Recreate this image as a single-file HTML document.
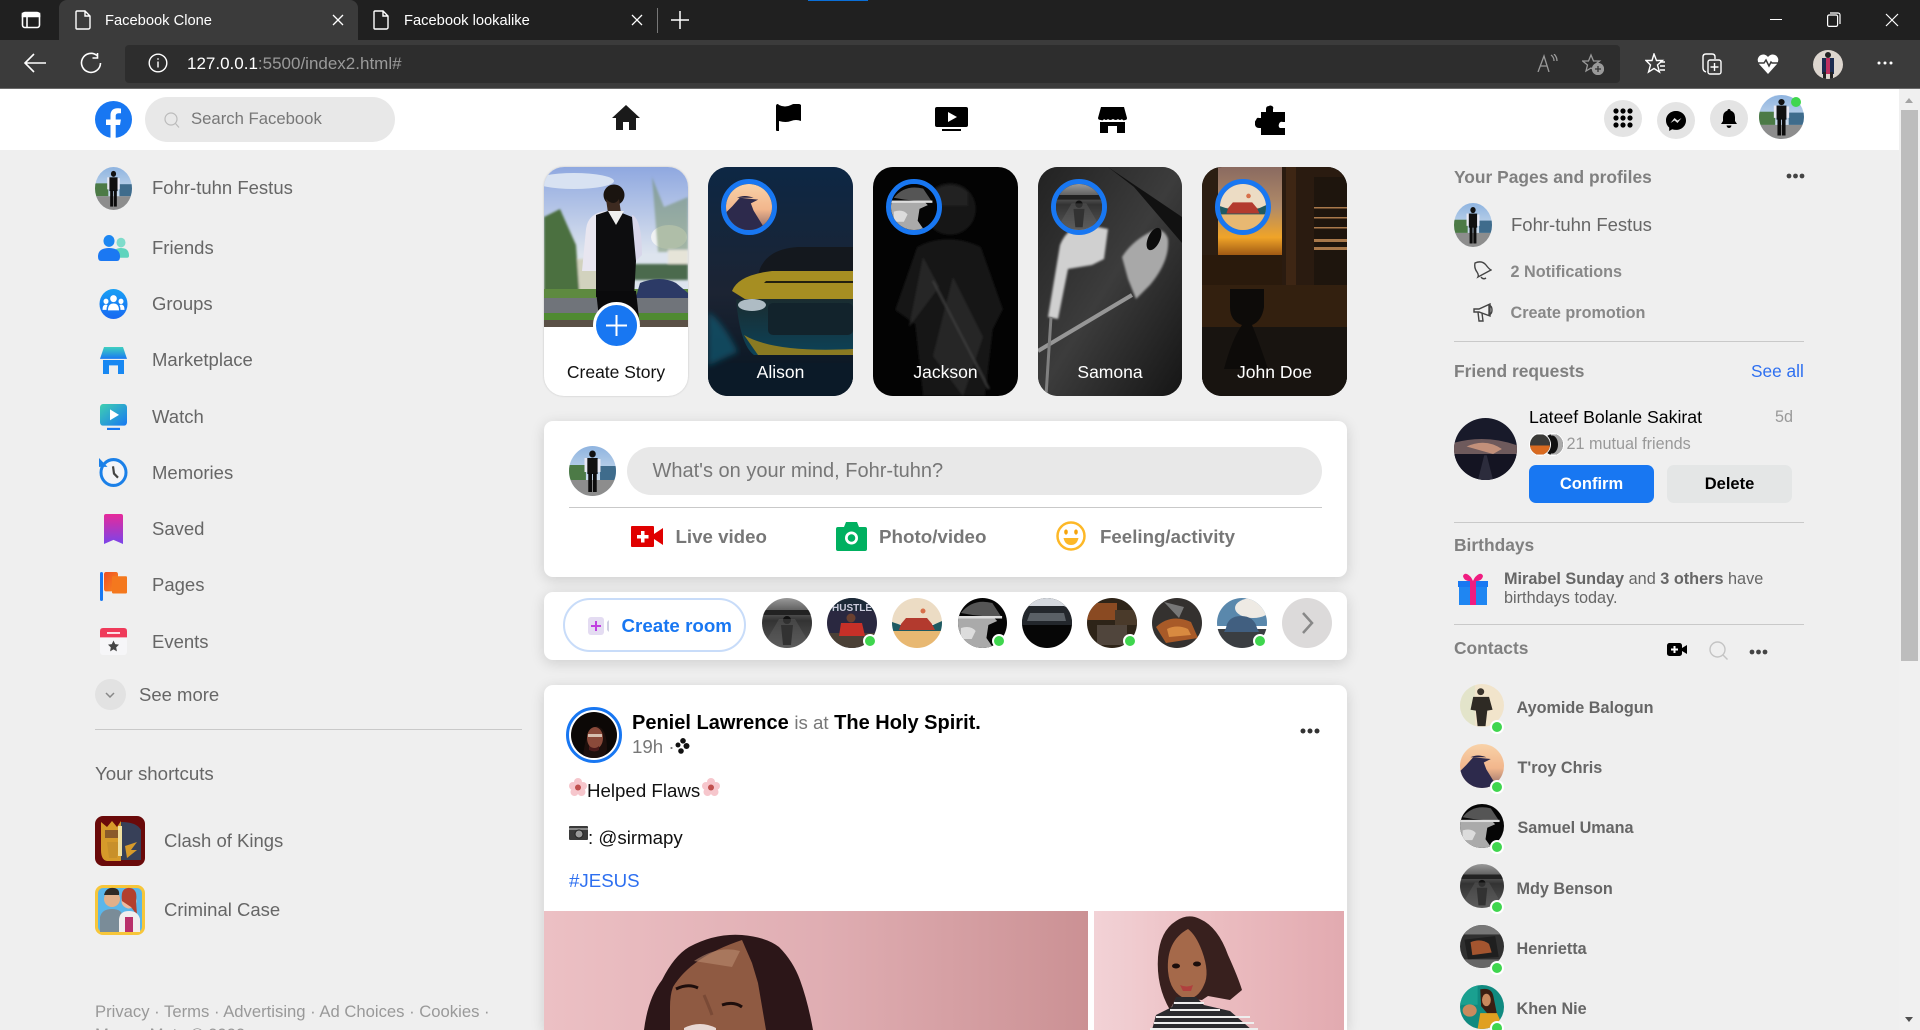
<!DOCTYPE html>
<html lang="en"><head><meta charset="utf-8"><title>Facebook Clone</title>
<style>
html,body{margin:0;padding:0;width:1920px;height:1030px;overflow:hidden;background:#efefef;font-family:"Liberation Sans",Arial,sans-serif}
#w{position:relative;width:1920px;height:1030px;overflow:hidden;background:#efefef}
.a{position:absolute;display:block}
.t{position:absolute;white-space:nowrap;line-height:24px;margin:0}
.r{border-radius:50%}
.b{font-weight:700}
.side{font-size:18.5px;color:#666}
.ct{font-size:16.2px;font-weight:700;color:#666}
.hd{font-size:17.4px;font-weight:700;color:#808080}
.st{position:absolute;top:167px;width:145px;height:229px;border-radius:20px;overflow:hidden}
.sl{position:absolute;left:0;right:0;top:193px;text-align:center;font-size:17.5px;line-height:24px;color:#fff}
.ring{position:absolute;left:13px;top:12px;width:56px;height:56px;box-sizing:border-box;border:5px solid #1877f2;border-radius:50%;overflow:hidden}
.ring svg{width:100%;height:100%;display:block}
.g{position:absolute;width:11px;height:11px;border-radius:50%;background:#3fd64e}
.gw{box-sizing:content-box;border:2px solid #fff;width:10px;height:10px}
.ln{position:absolute;height:1px;background:#c9c9c9}
.card{position:absolute;left:544px;width:803px;background:#fff;border-radius:9px;box-shadow:0 3px 14px rgba(0,0,0,.14)}
</style></head>
<body>
<div id="w">
<svg width="0" height="0" style="position:absolute">
<defs>
<linearGradient id="sky" x1="0" y1="0" x2="0" y2="1"><stop offset="0" stop-color="#8fb4e0"/><stop offset="1" stop-color="#e6eef2"/></linearGradient>
<linearGradient id="sun" x1="0" y1="0" x2="0" y2="1"><stop offset="0" stop-color="#f8d2a8"/><stop offset=".55" stop-color="#f2b68c"/><stop offset="1" stop-color="#8f6a68"/></linearGradient>
<linearGradient id="gr" x1="0" y1="0" x2="0" y2="1"><stop offset="0" stop-color="#999"/><stop offset=".45" stop-color="#333"/><stop offset="1" stop-color="#555"/></linearGradient>
<linearGradient id="bl" x1="0" y1="0" x2="0" y2="1"><stop offset="0" stop-color="#18a0f5"/><stop offset="1" stop-color="#1868f2"/></linearGradient>
<linearGradient id="tealblue" x1="0" y1="0" x2="0" y2="1"><stop offset="0" stop-color="#3fd0c0"/><stop offset="1" stop-color="#1878f2"/></linearGradient>
<linearGradient id="tlb" x1="0" y1="0" x2="1" y2="1"><stop offset="0" stop-color="#3fd0b0"/><stop offset="1" stop-color="#1878f2"/></linearGradient>
<linearGradient id="pur" x1="0" y1="0" x2="0" y2="1"><stop offset="0" stop-color="#e62a9a"/><stop offset="1" stop-color="#7a44ea"/></linearGradient>
<linearGradient id="org" x1="0" y1="0" x2="1" y2="1"><stop offset="0" stop-color="#f04e23"/><stop offset="1" stop-color="#f78a20"/></linearGradient>
<filter id="bl1"><feGaussianBlur stdDeviation="1"/></filter>
<filter id="bl2"><feGaussianBlur stdDeviation="3"/></filter>
<symbol id="me" viewBox="0 0 100 100" preserveAspectRatio="none"><rect width="100" height="100" fill="url(#sky)"/><rect y="38" width="36" height="30" fill="#4c7a46"/><rect x="66" y="40" width="34" height="28" fill="#3f6c8c"/><rect y="68" width="100" height="32" fill="#8d8d8d"/><circle cx="50" cy="16" r="7" fill="#111"/><rect x="33" y="24" width="7" height="28" fill="#e8e8f2"/><rect x="39" y="24" width="22" height="32" fill="#111"/><rect x="61" y="26" width="6" height="26" fill="#e8e8f2"/><rect x="41" y="54" width="8" height="38" fill="#0c0c0c"/><rect x="51" y="54" width="8" height="38" fill="#0c0c0c"/></symbol>
<symbol id="p1" viewBox="0 0 100 100" preserveAspectRatio="none"><rect width="100" height="100" fill="#f1e4cb"/><rect width="34" height="100" fill="#dbe5c9" opacity=".6"/><circle cx="47" cy="18" r="8" fill="#3a342c"/><path d="M30 30h36l8 30-12 2-4 36H40L36 62l-12-2z" fill="#2e2a24"/></symbol>
<symbol id="p2" viewBox="0 0 100 100" preserveAspectRatio="none"><rect width="100" height="100" fill="url(#sun)"/><path d="M30 30l40 4-16 8 6 16 26 42H0V62l14-14z" fill="#2d2a4c"/><path d="M24 30q16-8 36 0z" fill="#252245"/></symbol>
<symbol id="p3" viewBox="0 0 100 100" preserveAspectRatio="none"><rect width="100" height="100" fill="#050505"/><path d="M6 30Q30 0 70 10l20 30-60-6z" fill="#555"/><path d="M0 40l72-2 8 8-18 8-4 26 14 20H0z" fill="#aaa"/><path d="M6 60q20-6 30 6l-8 16H6z" fill="#dcdcdc"/><rect x="0" y="36" width="90" height="5" fill="#ddd"/></symbol>
<symbol id="p4" viewBox="0 0 100 100" preserveAspectRatio="none"><rect width="100" height="100" fill="url(#gr)"/><path d="M0 24h100v10H0z" fill="#222"/><circle cx="50" cy="44" r="8" fill="#111"/><path d="M38 54h24l-4 40H42z" fill="#151515"/><path d="M0 100l34-58h32l34 58z" fill="#6a6a6a" opacity=".35"/></symbol>
<symbol id="p5" viewBox="0 0 100 100" preserveAspectRatio="none"><rect width="100" height="100" fill="#303030"/><rect width="100" height="22" fill="#777"/><rect y="80" width="100" height="20" fill="#666"/><path d="M10 34l70-8 8 48-70 6z" fill="#1f1f1f"/><path d="M24 40q24-10 42 4l6 20-44 6z" fill="#a4552f"/></symbol>
<symbol id="p6" viewBox="0 0 100 100" preserveAspectRatio="none"><rect width="100" height="100" fill="#108a80"/><rect x="0" y="0" width="40" height="45" fill="#1aa090"/><path d="M46 10q26-6 30 16l8 40-16 6-20-24z" fill="#3b1e12"/><ellipse cx="60" cy="34" rx="10" ry="14" fill="#c98a5e"/><path d="M46 64h38l16 36H40z" fill="#e0a020"/><ellipse cx="22" cy="58" rx="16" ry="14" fill="#c98a5e"/></symbol>
<symbol id="p7" viewBox="0 0 100 100" preserveAspectRatio="none"><rect width="100" height="52" fill="#ecdcc4"/><rect y="64" width="100" height="36" fill="#e8b872"/><path d="M0 48l18 6 64 0 18-8v20H0z" fill="#1f5a62"/><path d="M18 52l10-12h42l10 12 6 12H14z" fill="#b33a2e"/><circle cx="62" cy="26" r="5" fill="#d8704a"/></symbol>
<symbol id="p8" viewBox="0 0 100 100" preserveAspectRatio="none"><rect width="100" height="100" fill="#060606"/><rect width="100" height="22" fill="#d4d8de"/><path d="M0 22l14-6h70l16 8v30H0z" fill="#23272c"/><path d="M16 30h68l4 16H10z" fill="#5a6066"/></symbol>
<symbol id="p9" viewBox="0 0 100 100" preserveAspectRatio="none"><rect width="100" height="100" fill="#2e2418"/><rect x="0" y="10" width="60" height="34" fill="#8a4a22"/><rect x="56" y="24" width="44" height="30" fill="#4a3a2a"/><rect x="20" y="54" width="60" height="40" fill="#50453c"/></symbol>
<symbol id="p10" viewBox="0 0 100 100" preserveAspectRatio="none"><rect width="100" height="100" fill="#34312f"/><path d="M24 8l40 10-10 22z" fill="#777"/><path d="M8 58q30-28 70-10l14 32-64 10z" fill="#a85a28"/><path d="M30 62q20-10 42 0l6 12-44 4z" fill="#d88a40"/></symbol>
<symbol id="p11" viewBox="0 0 100 100" preserveAspectRatio="none"><rect width="100" height="56" fill="#5a88ac"/><ellipse cx="72" cy="20" rx="36" ry="20" fill="#eeeae4"/><rect y="62" width="100" height="38" fill="#3a3e42"/><path d="M18 60q4-24 30-24t32 24l4 8H14z" fill="#415f80"/></symbol>
<symbol id="p12" viewBox="0 0 100 100" preserveAspectRatio="none"><rect width="100" height="100" fill="#2a2840"/><rect y="0" width="100" height="26" fill="#1c2a38"/><text x="50" y="26" font-size="20" font-family="Liberation Sans" font-weight="700" fill="#ccd" text-anchor="middle">HUSTLE</text><rect y="70" width="100" height="30" fill="#4a4036"/><circle cx="48" cy="40" r="9" fill="#6a4030"/><path d="M28 50h42l6 26H24z" fill="#c63028"/></symbol>
<symbol id="sky2" viewBox="0 0 100 100" preserveAspectRatio="none"><rect width="100" height="100" fill="#181a2a"/><path d="M0 40q50-14 100 4v14H0z" fill="#6e5a5c"/><path d="M20 46q30-14 56 4l-14 8z" fill="#c2907a"/><path d="M0 58h100v42H0z" fill="#141422"/><path d="M48 60l4 0 10 40H38z" fill="#2c2c3c"/></symbol>
</defs>
</svg>

<!-- browser chrome -->
<div class="a" style="left:0;top:0;width:1920px;height:40px;background:#202020"></div>
<div class="a" style="left:808px;top:0;width:60px;height:1px;background:#0a6fd8"></div>
<div class="a" style="left:59px;top:0;width:299px;height:40px;background:#3b3b3b;border-radius:8px 8px 0 0"></div>
<div class="a" style="left:0;top:40px;width:1920px;height:48px;background:#3b3b3b"></div>
<div class="a" style="left:0;top:88px;width:1920px;height:1px;background:#6a6a6a"></div>
<div class="a" style="left:125px;top:45px;width:1495px;height:38px;background:#2d2d2d;border-radius:4px"></div>

<svg class="a" style="left:21px;top:11px" width="20" height="18" viewBox="0 0 20 18" fill="none" stroke="#fff" stroke-width="1.6"><rect x="1.5" y="1.5" width="17" height="15" rx="2.5"/><path d="M1.5 2.5h17v3h-17z" fill="#fff"/><path d="M6 5v11"/></svg>
<svg class="a" style="left:75px;top:10px" width="16" height="20" viewBox="0 0 16 20" fill="none" stroke="#fff" stroke-width="1.4"><path d="M2 1h8l5 5v11.500a1.500 1.500 0 0 1-1.500 1.500h-11.500a1 1 0 0 1-1-1V2a1 1 0 0 1 1-1zM10 1v5h5"/></svg>
<div class="t" style="left:105px;top:9px;font-size:14.7px;color:#fff">Facebook Clone</div>
<svg class="a" style="left:332px;top:14px" width="12" height="12" viewBox="0 0 12 12" stroke="#fff" stroke-width="1.3"><path d="M1 1l10 10M11 1L1 11"/></svg>
<svg class="a" style="left:373px;top:10px" width="16" height="20" viewBox="0 0 16 20" fill="none" stroke="#fff" stroke-width="1.4"><path d="M2 1h8l5 5v11.500a1.500 1.500 0 0 1-1.500 1.500h-11.500a1 1 0 0 1-1-1V2a1 1 0 0 1 1-1zM10 1v5h5"/></svg>
<div class="t" style="left:404px;top:9px;font-size:14.7px;color:#fff">Facebook lookalike</div>
<svg class="a" style="left:631px;top:14px" width="12" height="12" viewBox="0 0 12 12" stroke="#fff" stroke-width="1.3"><path d="M1 1l10 10M11 1L1 11"/></svg>
<div class="a" style="left:657px;top:8px;width:1px;height:25px;background:#777"></div>
<svg class="a" style="left:671px;top:11px" width="18" height="18" viewBox="0 0 18 18" stroke="#fff" stroke-width="1.5"><path d="M9 0v18M0 9h18"/></svg>

<svg class="a" style="left:23px;top:52px" width="24" height="22" viewBox="0 0 24 22" fill="none" stroke="#fff" stroke-width="1.6"><path d="M23 11H2M11 2l-9 9 9 9"/></svg>
<svg class="a" style="left:80px;top:52px" width="22" height="22" viewBox="0 0 22 22" fill="none" stroke="#fff" stroke-width="1.6"><path d="M17 3.500A9.500 9.500 0 1 0 20.500 11"/><path d="M17.500 1v5h-5"/></svg>
<svg class="a" style="left:148px;top:53px" width="20" height="20" viewBox="0 0 20 20" fill="none" stroke="#fff" stroke-width="1.4"><circle cx="10" cy="10" r="8.800"/><path d="M10 8.500v6M10 5.200v1.600"/></svg>
<div class="t" style="left:187px;top:52px;font-size:17px"><span style="color:#fff">127.0.0.1</span><span style="color:#9a9a9a">:5500/index2.html#</span></div>
<svg class="a" style="left:1537px;top:54px" width="21" height="18" viewBox="0 0 21 18" fill="none" stroke="#9a9a9a" stroke-width="1.300"><path d="M1 18L7 2l5 16M3 12h7M14 1q3 2 3 6M17 0q3 3 3 7"/></svg>
<svg class="a" style="left:1582px;top:53px" width="22" height="22" viewBox="0 0 22 22" fill="none" stroke="#9a9a9a" stroke-width="1.300"><path d="M9 2l2.500 6h6l-5 4 1.500 6-5-3-5 3 1.500-6-5-4h6z"/><circle cx="16" cy="16" r="5.500" fill="#9a9a9a"/><path d="M16 13v6M13 16h6" stroke="#333"/></svg>
<svg class="a" style="left:1645px;top:53px" width="21" height="21" viewBox="0 0 21 21" fill="none" stroke="#fff" stroke-width="1.400"><path d="M9 1l2.500 6.500h6L12.500 12l2 7L9 15.500 3.500 19l2-7L1 7.500h6z"/><path d="M15 9h5M15 13h5M15 17h5"/></svg>
<svg class="a" style="left:1701px;top:53px" width="21" height="22" viewBox="0 0 21 22" fill="none" stroke="#fff" stroke-width="1.400"><rect x="7" y="7" width="13" height="14" rx="2"/><path d="M13.500 10v8M9.500 14h8M5 19Q2 18 2 15V4q0-3 3-3h6q3 0 3 3v2"/></svg>
<svg class="a" style="left:1757px;top:53px" width="22" height="21" viewBox="0 0 22 21" fill="#fff"><path d="M11 21L2 11Q-1 6 3 2.500 7.500 0 11 4q3.500-4 8-1.500 4 3.500 1 8.500z"/><path d="M1 10h6l2-3 3 6 2-4 1 1h6" stroke="#3b3b3b" stroke-width="1.500" fill="none"/></svg>
<svg class="a r" style="left:1813px;top:50px;overflow:hidden" width="30" height="29" viewBox="0 0 30 29"><rect width="30" height="29" fill="#ddd6cf"/><rect x="9" y="8" width="12" height="16" fill="#1c2c50"/><rect x="13" y="8" width="4" height="16" fill="#c03060"/><circle cx="15" cy="5" r="3" fill="#222"/><rect x="10" y="22" width="3" height="7" fill="#222"/><rect x="17" y="22" width="3" height="7" fill="#222"/></svg>
<svg class="a" style="left:1877px;top:61px" width="16" height="4" viewBox="0 0 16 4" fill="#fff"><circle cx="2" cy="2" r="1.500"/><circle cx="8" cy="2" r="1.500"/><circle cx="14" cy="2" r="1.500"/></svg>
<div class="a" style="left:1770px;top:19px;width:12px;height:1px;background:#fff"></div>
<svg class="a" style="left:1827px;top:12px" width="14" height="15" viewBox="0 0 14 15" fill="none" stroke="#fff" stroke-width="1.200"><rect x=".6" y="3" width="10" height="11.400" rx="1.500"/><path d="M3 1h8a2 2 0 0 1 2 2v9"/></svg>
<svg class="a" style="left:1885px;top:13px" width="14" height="14" viewBox="0 0 14 14" stroke="#fff" stroke-width="1.200"><path d="M1 1l12 12M13 1L1 13"/></svg>

<!-- top nav -->
<div class="a" style="left:0;top:89px;width:1899px;height:61px;background:#fff"></div>
<svg class="a" style="left:95px;top:101px" width="37" height="37" viewBox="0 0 37 37"><circle cx="18.500" cy="18.500" r="18.500" fill="#1877f2"/><path d="M15.500 37V24H11v-5.500h4.500v-4.200c0-4.600 2.700-7 6.800-7 2 0 3.700.3 3.700.3v4.700h-2.300c-2.300 0-3 1.400-3 2.800v3.400h5.200l-.9 5.500h-4.300v13z" fill="#fff"/></svg>
<div class="a" style="left:145px;top:97px;width:250px;height:45px;background:#e8e8e8;border-radius:23px"></div>
<svg class="a" style="left:164px;top:112px" width="16" height="16" viewBox="0 0 16 16" fill="none" stroke="#bbb" stroke-width="1.200"><circle cx="7" cy="7" r="6"/><path d="M11.500 11.500L15 15.500"/></svg>
<div class="t" style="left:191px;top:107px;font-size:16.7px;color:#777">Search Facebook</div>

<svg class="a" style="left:612px;top:105px" width="28" height="25" viewBox="0 0 28 25" fill="#1a1a1a"><path d="M14 0L0 13h4v12h7v-8h6v8h7V13h4z"/></svg>
<svg class="a" style="left:776px;top:104px" width="25" height="27" viewBox="0 0 25 27" fill="#000"><path d="M0 2q0-2 2-2l1 1q6 3 12 0t10 0v16q-5-2-10 0t-12 0v10H1q-1 0-1-1z"/></svg>
<svg class="a" style="left:935px;top:107px" width="33" height="24" viewBox="0 0 33 24"><rect width="33" height="20" rx="2" fill="#000"/><path d="M13 5l9 5-9 5z" fill="#fff"/><rect x="7" y="22" width="19" height="2" fill="#000"/></svg>
<svg class="a" style="left:1098px;top:107px" width="29" height="26" viewBox="0 0 29 26" fill="#000"><path d="M3 0h23l3 11q0 2-2 2-2 1-3-1-2 2-4 0-2 2-5 0-3 2-5 0-2 2-4 0-1 2-3 1-3 0-3-2z"/><path d="M2 15h25v11h-8v-7h-9v7H2z"/></svg>
<svg class="a" style="left:1255px;top:105px" width="31" height="30" viewBox="0 0 31 30" fill="#000"><path d="M11 7V4q0-3 3-3 1-1 3 0 2 1 1 3v3h12v10h-2q-3-1-4 2t1 4h5v7H6v-7H4q-3 0-4-3t1-5q1-3 3-2h2V7z"/></svg>

<div class="a" style="left:1604px;top:100px;width:38px;height:37px;border-radius:50%;background:#e4e4e4"></div>
<svg class="a" style="left:1613px;top:108px" width="20" height="20" viewBox="0 0 20 20" fill="#000"><circle cx="3" cy="3" r="2.600"/><circle cx="10" cy="3" r="2.600"/><circle cx="17" cy="3" r="2.600"/><circle cx="3" cy="10" r="2.600"/><circle cx="10" cy="10" r="2.600"/><circle cx="17" cy="10" r="2.600"/><circle cx="3" cy="17" r="2.600"/><circle cx="10" cy="17" r="2.600"/><circle cx="17" cy="17" r="2.600"/></svg>
<div class="a" style="left:1657px;top:102px;width:38px;height:37px;border-radius:50%;background:#e4e4e4"></div>
<svg class="a" style="left:1666px;top:111px" width="20" height="20" viewBox="0 0 20 20"><path d="M10 0C4.400 0 0 4 0 9.500c0 2.900 1.200 5.300 3.200 7V20l3-1.700c1.200.4 2.500.6 3.800.6 5.600 0 10-4 10-9.400S15.600 0 10 0z" fill="#000"/><path d="M4.500 12l4-5 3 2.500L15.500 7l-4 5-3-2.500z" fill="#e4e4e4"/></svg>
<div class="a" style="left:1710px;top:100px;width:38px;height:37px;border-radius:50%;background:#e4e4e4"></div>
<svg class="a" style="left:1721px;top:109px" width="16" height="19" viewBox="0 0 16 19" fill="#000"><path d="M8 0q1.500 0 1.500 1.500Q14 3 14 8v4l2 3H0l2-3V8q0-5 4.500-6.500Q6.500 0 8 0z"/><path d="M5.500 16.500h5Q10 19 8 19t-2.500-2.500z"/></svg>
<svg class="a r" style="left:1759px;top:95px;width:45px;height:44px"><use href="#me" width="100%" height="100%"/></svg>
<div class="g" style="left:1791px;top:97px;width:10px;height:10px"></div>

<!-- left sidebar -->
<svg class="a r" style="left:95px;top:167px;width:37px;height:43px"><use href="#me" width="100%" height="100%"/></svg>
<div class="t side" style="left:152px;top:176px">Fohr-tuhn Festus</div>
<svg class="a" style="left:98px;top:235px" width="31" height="26" viewBox="0 0 31 24" preserveAspectRatio="none"><circle cx="23" cy="7" r="4.500" fill="#7fdccb"/><path d="M15 19q0-7 8-7t8 7q0 2-2 2H17q-2 0-2-2z" fill="#5fd4bd"/><circle cx="11" cy="5.500" r="5.500" fill="#1b86f2"/><path d="M0 20q0-8 11-8t11 8q0 4-3 4H3q-3 0-3-4z" fill="#1b78f2"/></svg>
<div class="t side" style="left:152px;top:236px">Friends</div>
<svg class="a" style="left:99px;top:289px" width="29" height="30" viewBox="0 0 29 28" preserveAspectRatio="none"><circle cx="14.500" cy="14" r="14" fill="url(#bl)"/><g fill="#fff"><circle cx="14.500" cy="9" r="3.300"/><circle cx="7" cy="11.500" r="2.500"/><circle cx="22" cy="11.500" r="2.500"/><path d="M9 20q0-6.500 5.500-6.500T20 20z"/><path d="M3.500 19.500q0-5 3.500-5l1.500.5Q7.500 17 7.500 19.500zM25.500 19.500q0-5-3.500-5l-1.500.5q1 2 1 4.500z"/></g></svg>
<div class="t side" style="left:152px;top:292px">Groups</div>
<svg class="a" style="left:100px;top:347px" width="27" height="27" viewBox="0 0 27 25" preserveAspectRatio="none"><path d="M4 0h19l4 11H0z" fill="url(#tealblue)"/><path d="M3 12h21v13h-6v-8H9v8H3z" fill="#1888f2"/></svg>
<div class="t side" style="left:152px;top:348px">Marketplace</div>
<svg class="a" style="left:100px;top:404px" width="27" height="26" viewBox="0 0 27 24" preserveAspectRatio="none"><rect width="27" height="20" rx="3" fill="url(#tlb)"/><path d="M10 5l9 5-9 5z" fill="#fff"/><rect x="7" y="22" width="13" height="2" fill="#1878f2"/></svg>
<div class="t side" style="left:152px;top:405px">Watch</div>
<svg class="a" style="left:99px;top:457px" width="29" height="30" viewBox="0 0 29 29" preserveAspectRatio="none"><circle cx="14.500" cy="15" r="12.500" fill="#f3f4f8" stroke="#1b80e8" stroke-width="3"/><path d="M0 1v8.500h8.500z" fill="#1b80e8"/><path d="M14 9l1 7 4 4" fill="none" stroke="#444" stroke-width="2.200"/></svg>
<div class="t side" style="left:152px;top:461px">Memories</div>
<svg class="a" style="left:104px;top:514px" width="19" height="30" viewBox="0 0 19 29" preserveAspectRatio="none"><path d="M2 0h15q2 0 2 2v27l-9.500-4L0 29V2q0-2 2-2z" fill="url(#pur)"/></svg>
<div class="t side" style="left:152px;top:517px">Saved</div>
<svg class="a" style="left:100px;top:572px" width="27" height="29" viewBox="0 0 27 27" preserveAspectRatio="none"><rect width="3" height="27" rx="1.500" fill="#1878f2"/><rect x="4" y="0" width="14" height="18" rx="2" fill="url(#org)"/><rect x="12" y="4" width="15" height="16" rx="1" fill="#f4781e"/></svg>
<div class="t side" style="left:152px;top:573px">Pages</div>
<svg class="a" style="left:100px;top:628px" width="27" height="27" viewBox="0 0 27 26" preserveAspectRatio="none"><rect width="27" height="26" rx="3" fill="#f6f6f8"/><path d="M3 0h21q3 0 3 3v6H0V3q0-3 3-3z" fill="#ef3a5a"/><rect x="7" y="4" width="13" height="1.600" fill="#fff"/><path d="M13.500 12l1.700 3.500 3.800.5-2.800 2.600.7 3.900-3.400-1.900-3.400 1.900.7-3.900L8 16l3.800-.5z" fill="#444"/></svg>
<div class="t side" style="left:152px;top:630px">Events</div>
<div class="a r" style="left:95px;top:679px;width:31px;height:31px;background:#e2e2e2"></div>
<svg class="a" style="left:105px;top:692px" width="10" height="6" viewBox="0 0 10 6" fill="none" stroke="#888" stroke-width="1.500"><path d="M1 1l4 4 4-4"/></svg>
<div class="t side" style="left:139px;top:683px">See more</div>
<div class="ln" style="left:95px;top:729px;width:427px"></div>
<div class="t" style="left:95px;top:762px;font-size:18.7px;color:#666">Your shortcuts</div>

<svg class="a" style="left:95px;top:816px;border-radius:8px" width="50" height="50" viewBox="0 0 50 50"><rect width="50" height="50" fill="#6a0a0a"/><path d="M6 6l6 5 5-6 5 6 4-6v40H12Q6 44 6 34z" fill="#d69a2a"/><path d="M26 6q16 0 20 8v30H26z" fill="#374058"/><path d="M10 14h16v8H10z" fill="#8a5a2a"/><path d="M12 26h12l-2 16H14z" fill="#c8902a"/><path d="M30 30l12-4-6 8 6 0-10 8z" fill="#d69a2a"/><rect x="23" y="10" width="4" height="30" fill="#f0e0a0"/></svg>
<div class="t side" style="left:164px;top:829px">Clash of Kings</div>
<svg class="a" style="left:95px;top:885px;border-radius:8px" width="50" height="50" viewBox="0 0 50 50"><rect width="50" height="50" fill="#f7c63a"/><rect x="3" y="3" width="44" height="44" rx="5" fill="#5ab6ea"/><circle cx="17" cy="14" r="8" fill="#e0b08a"/><path d="M9 10q2-8 10-7 6 1 5 7z" fill="#2e2a24"/><path d="M5 47V32q2-8 12-8t11 8v15z" fill="#7a8c98"/><circle cx="34" cy="16" r="7.500" fill="#ecbaa0"/><path d="M27 16q-2-14 8-13 8 1 6 13l1 14-6-8z" fill="#b2402e"/><path d="M24 47V34q1-8 10-8t11 8v13z" fill="#f0eeee"/><rect x="30" y="32" width="8" height="15" fill="#b8306a"/></svg>
<div class="t side" style="left:164px;top:898px">Criminal Case</div>
<div class="t" style="left:95px;top:1000px;font-size:16.65px;color:#999">Privacy · Terms · Advertising · Ad Choices · Cookies ·</div>
<div class="t" style="left:95px;top:1023px;font-size:16.65px;color:#999">Manny Meta © 2022</div>

<!-- stories -->
<div class="st" style="left:544px;width:144px;background:#fff;box-shadow:0 0 2px rgba(0,0,0,.18)">
<svg class="a" style="left:0;top:0" width="144" height="160" viewBox="0 0 144 160"><defs><linearGradient id="s1" x1="0" y1="0" x2="0" y2="1"><stop offset="0" stop-color="#8fa8e0"/><stop offset=".55" stop-color="#dde4ee"/></linearGradient></defs><rect width="144" height="160" fill="url(#s1)"/><ellipse cx="30" cy="14" rx="40" ry="8" fill="#d8e2f2"/><ellipse cx="125" cy="70" rx="18" ry="12" fill="#f0f2f4"/><g filter="url(#bl1)"><rect x="10" y="92" width="45" height="34" fill="#d2d2be"/><path d="M0 50l16-8 16 36 4 58H0z" fill="#4c7040"/><path d="M108 10l12 30 24-10v55h-30z" fill="#6d8c5e" opacity=".5"/><rect x="124" y="83" width="20" height="24" fill="#e6e4d8"/><rect x="88" y="97" width="56" height="16" fill="#4c6a4e"/></g><rect y="122" width="144" height="9" fill="#5e8a40"/><path d="M92 130l4-14q20-8 36 0l12 10v6H92z" fill="#2c3a66"/><rect y="131" width="144" height="15" fill="#70747a"/><rect y="146" width="144" height="7" fill="#4f8a32"/><rect y="153" width="144" height="7" fill="#5a5046"/><g transform="translate(-8 0)"><circle cx="78" cy="28" r="10.500" fill="#1a1410"/><path d="M70 32q8 8 13 0l2 14H72z" fill="#3d2a20"/><path d="M50 62q2-16 20-18l-8 60H46z" fill="#e8e6f0"/><path d="M96 48q10 4 10 40l-6 6z" fill="#d8d6ea"/><path d="M60 48l12-4 6 10 8-8 10 4 4 44-2 36H60z" fill="#0d0d0f"/><path d="M72 44l8 14 8-14z" fill="#eeeeee"/><path d="M60 124h40l4 36H64z" fill="#0a0a0c"/></g></svg>
<div class="a" style="left:49px;top:135px;width:41px;height:41px;background:#1877f2;border:3px solid #fff;border-radius:50%"></div>
<svg class="a" style="left:60px;top:146px" width="25" height="25" viewBox="0 0 25 25" stroke="#fff" stroke-width="2"><path d="M12.500 2v21M2 12.500h21"/></svg>
<div class="sl" style="color:#111;top:193px">Create Story</div>
</div>

<div class="st" style="left:708px;background:#0f2236">
<svg class="a" style="left:0;top:0" width="145" height="229" viewBox="0 0 145 229"><defs><linearGradient id="s2" x1="0" y1="0" x2="0" y2="1"><stop offset="0" stop-color="#0d2744"/><stop offset=".55" stop-color="#1c2433"/><stop offset="1" stop-color="#061420"/></linearGradient><linearGradient id="s2c" x1="0" y1="0" x2="0" y2="1"><stop offset="0" stop-color="#1a2c30"/><stop offset="1" stop-color="#0c4258"/></linearGradient></defs><rect width="145" height="229" fill="url(#s2)"/><path d="M50 108q6-26 40-28h55v28z" fill="#14181e"/><path d="M24 124q6-16 40-20h81v30H40z" fill="#a68e22"/><path d="M28 132h117v56H46q-14-10-18-56z" fill="url(#s2c)"/><path d="M58 114h87v2H56z" fill="#23200f"/><rect x="60" y="136" width="85" height="32" rx="5" fill="#12232c"/><path d="M36 168q30 18 109 14v6H50z" fill="#8a7a22"/><ellipse cx="44" cy="138" rx="14" ry="6" fill="#aebcc4"/><path d="M0 196h145v33H0z" fill="#0b1a28"/><g filter="url(#bl2)"><path d="M0 145q14 8 30 40l-30 14z" fill="#0f5a72" opacity=".7"/></g></svg>
<div class="ring"><svg><use href="#p2" width="100%" height="100%"/></svg></div>
<div class="sl">Alison</div>
</div>

<div class="st" style="left:873px;background:#030303">
<svg class="a" style="left:0;top:0" width="145" height="229" viewBox="0 0 145 229"><g filter="url(#bl1)"><circle cx="77" cy="42" r="26" fill="#141414"/><path d="M60 25q17-14 35 0v14H60z" fill="#242424"/><path d="M44 80q30-16 64 0l22 62-10 20-8 67H50l-8-72-20-14z" fill="#181818"/><path d="M50 90l16 30-30 40zM80 110l30 60-20 59-30-40z" fill="#272727"/><path d="M60 114l56 108" stroke="#3a3a3a" stroke-width="2"/></g></svg>
<div class="ring"><svg><use href="#p3" width="100%" height="100%"/></svg></div>
<div class="sl">Jackson</div>
</div>

<div class="st" style="left:1038px;width:144px;background:#1c1c1c">
<svg class="a" style="left:0;top:0" width="144" height="229" viewBox="0 0 144 229"><defs><linearGradient id="s4" x1="0" y1="0" x2="1" y2="1"><stop offset="0" stop-color="#222"/><stop offset=".5" stop-color="#3c3c3c"/><stop offset="1" stop-color="#151515"/></linearGradient></defs><rect width="144" height="229" fill="url(#s4)"/><path d="M70 0l74 50v26L96 20z" fill="#111"/><g filter="url(#bl1)"><path d="M70 62l-4 30-12 6-24 4-10 50-10-2 12-72q8-20 28-20z" fill="#d0d0d0"/><path d="M90 112l-6-22q10-16 30-26 12-4 16 8 2 22-18 46l-14 14z" fill="#a8a8a8"/></g><ellipse cx="116" cy="72" rx="6" ry="12" transform="rotate(25 116 72)" fill="#0c0c0c"/><path d="M94 128L0 184" stroke="#969696" stroke-width="4" fill="none"/><path d="M13 150l-5 79" stroke="#808080" stroke-width="3" fill="none"/></svg>
<div class="ring"><svg><use href="#p4" width="100%" height="100%"/></svg></div>
<div class="sl">Samona</div>
</div>

<div class="st" style="left:1202px;background:#161310">
<svg class="a" style="left:0;top:0" width="145" height="229" viewBox="0 0 145 229"><defs><linearGradient id="s5" x1="0" y1="0" x2="0" y2="1"><stop offset="0" stop-color="#8a6a60"/><stop offset=".45" stop-color="#b08a68"/><stop offset=".8" stop-color="#f0a428"/><stop offset="1" stop-color="#a05a14"/></linearGradient></defs><rect width="145" height="229" fill="#14110e"/><rect x="16" y="0" width="64" height="88" fill="url(#s5)"/><rect x="0" y="0" width="16" height="120" fill="#2c1e12"/><rect x="80" y="0" width="65" height="124" fill="#2a1b10"/><rect x="84" y="0" width="10" height="124" fill="#3e2614"/><path d="M112 10h33v110h-33z" fill="#1e150d"/><g fill="#a8784a"><rect x="112" y="40" width="33" height="1.500"/><rect x="112" y="50" width="33" height="1.500"/><rect x="112" y="60" width="33" height="1.500"/><rect x="112" y="72" width="33" height="3"/><rect x="112" y="80" width="33" height="3"/></g><rect x="0" y="88" width="80" height="30" fill="#2a1a0c"/><path d="M0 118h145v46H0z" fill="#33200f"/><rect y="160" width="145" height="69" fill="#181410"/><path d="M28 122h34v18q-2 14-12 18 6 14 16 44H22q8-30 18-44-12-4-12-18z" fill="#0d0b09"/></svg>
<div class="ring"><svg><use href="#p7" width="100%" height="100%"/></svg></div>
<div class="sl">John Doe</div>
</div>

<!-- composer -->
<div class="card" style="top:421px;height:156px"></div>
<svg class="a r" style="left:569px;top:446px;width:47px;height:50px"><use href="#me" width="100%" height="100%"/></svg>
<div class="a" style="left:627px;top:447px;width:695px;height:48px;background:#e8e8e8;border-radius:24px"></div>
<div class="t" style="left:652.500px;top:459px;font-size:20px;color:#777">What's on your mind, Fohr-tuhn?</div>
<div class="ln" style="left:569px;top:507px;width:753px"></div>
<svg class="a" style="left:631px;top:526px" width="32" height="21" viewBox="0 0 32 21"><rect width="23" height="21" rx="1" fill="#e00000"/><path d="M23 8l9-6v17l-9-6z" fill="#e00000"/><path d="M10 5h3.500v4h4v3.500h-4v4H10v-4H6V9h4z" fill="#fff"/></svg>
<div class="t b" style="left:675.500px;top:525px;font-size:18.7px;color:#777">Live video</div>
<svg class="a" style="left:836px;top:522px" width="31" height="29" viewBox="0 0 31 29"><path d="M2 5h6l2-5h11l2 5h6q2 0 2 2v20q0 2-2 2H2q-2 0-2-2V7q0-2 2-2z" fill="#00b060"/><circle cx="15.500" cy="16" r="6.500" fill="#fff"/><circle cx="15.500" cy="16" r="3.800" fill="#00b060"/></svg>
<div class="t b" style="left:879px;top:525px;font-size:18.8px;color:#777">Photo/video</div>
<svg class="a" style="left:1056px;top:521px" width="30" height="30" viewBox="0 0 30 30"><circle cx="15" cy="15" r="13.500" fill="#fff" stroke="#fdb827" stroke-width="2.500"/><ellipse cx="10" cy="11" rx="1.800" ry="2.600" fill="#f5a30a"/><ellipse cx="20" cy="11" rx="1.800" ry="2.600" fill="#f5a30a"/><path d="M7.500 17h15q-1.500 7-7.500 7t-7.500-7z" fill="#fdb827"/></svg>
<div class="t b" style="left:1100px;top:525px;font-size:18.7px;color:#777">Feeling/activity</div>

<!-- room bar -->
<div class="card" style="top:592px;height:68px"></div>
<div class="a" style="left:563px;top:598px;width:183px;height:54px;box-sizing:border-box;border:2px solid #c8dcf9;border-radius:27px;background:#fff"></div>
<svg class="a" style="left:588px;top:617px" width="23" height="18" viewBox="0 0 23 18"><rect width="16" height="18" rx="3" fill="#e4dcf2"/><path d="M21 3v12l-2-2V5z" fill="#cfcfe2"/><path d="M7 4h2v4h4v2H9v4H7v-4H3V8h4z" fill="#c040e0"/></svg>
<div class="t b" style="left:621.500px;top:614px;font-size:18.75px;color:#1877f2">Create room</div>
<svg class="a r" style="left:762px;top:598px;width:50px;height:50px"><use href="#p4" width="100%" height="100%"/></svg>
<svg class="a r" style="left:827px;top:598px;width:50px;height:50px"><use href="#p12" width="100%" height="100%"/></svg>
<svg class="a r" style="left:892px;top:598px;width:50px;height:50px"><use href="#p7" width="100%" height="100%"/></svg>
<svg class="a r" style="left:958px;top:598px;width:49px;height:50px"><use href="#p3" width="100%" height="100%"/></svg>
<svg class="a r" style="left:1022px;top:598px;width:50px;height:50px"><use href="#p8" width="100%" height="100%"/></svg>
<svg class="a r" style="left:1087px;top:598px;width:50px;height:50px"><use href="#p9" width="100%" height="100%"/></svg>
<svg class="a r" style="left:1152px;top:598px;width:50px;height:50px"><use href="#p10" width="100%" height="100%"/></svg>
<svg class="a r" style="left:1217px;top:598px;width:50px;height:50px"><use href="#p11" width="100%" height="100%"/></svg>
<div class="g gw" style="left:863px;top:634px"></div>
<div class="g gw" style="left:992px;top:634px"></div>
<div class="g gw" style="left:1123px;top:634px"></div>
<div class="g gw" style="left:1253px;top:634px"></div>
<div class="a r" style="left:1282px;top:598px;width:50px;height:50px;background:#dcdada"></div>
<svg class="a" style="left:1301px;top:612px" width="13" height="22" viewBox="0 0 13 22" fill="none" stroke="#888" stroke-width="2.500"><path d="M2 1l9 10-9 10"/></svg>

<!-- post -->
<div class="card" style="top:685px;height:345px;border-radius:9px 9px 0 0"></div>
<div class="a r" style="left:566px;top:707px;width:56px;height:56px;box-sizing:border-box;border:3px solid #1877f2;background:#fff"></div>
<svg class="a r" style="left:571px;top:712px;width:46px;height:46px" viewBox="0 0 46 46"><rect width="46" height="46" fill="#0c0806"/><path d="M12 46q2-28 14-32 10 2 10 24l-4 8z" fill="#1d0f0c"/><ellipse cx="24" cy="26" rx="8" ry="11" fill="#8a4a3a"/><rect x="17" y="22" width="14" height="3" fill="#d6c0b0"/><path d="M18 34q6 4 10 0v4q-4 3-10 0z" fill="#4a1a1a"/></svg>
<div class="t" style="left:632px;top:711px;font-size:20px;color:#000"><span class="b">Peniel Lawrence</span> <span style="font-size:18.7px;color:#777">is at</span> <span class="b">The Holy Spirit.</span></div>
<div class="t" style="left:632px;top:735px;font-size:18.7px;color:#777">19h ·</div>
<svg class="a" style="left:675px;top:738px" width="15" height="16" viewBox="0 0 15 16" fill="#111"><circle cx="8" cy="2.800" r="2.800"/><circle cx="3" cy="7" r="2.500"/><circle cx="11.500" cy="8" r="3"/><circle cx="6" cy="13" r="2.800"/></svg>
<svg class="a" style="left:1300px;top:728px" width="20" height="6" viewBox="0 0 20 6" fill="#333"><circle cx="3" cy="3" r="2.500"/><circle cx="10" cy="3" r="2.500"/><circle cx="17" cy="3" r="2.500"/></svg>

<svg class="a" style="left:569px;top:778px" width="18" height="19" viewBox="0 0 18 19"><g fill="#f6c6cc"><circle cx="9" cy="4" r="4"/><circle cx="4" cy="8" r="4"/><circle cx="14" cy="8" r="4"/><circle cx="5.500" cy="14" r="4"/><circle cx="12.500" cy="14" r="4"/></g><circle cx="9" cy="9.500" r="3" fill="#c0504e"/></svg>
<div class="t" style="left:587px;top:779px;font-size:18.7px;color:#111">Helped Flaws</div>
<svg class="a" style="left:702px;top:778px" width="18" height="19" viewBox="0 0 18 19"><g fill="#f6c6cc"><circle cx="9" cy="4" r="4"/><circle cx="4" cy="8" r="4"/><circle cx="14" cy="8" r="4"/><circle cx="5.500" cy="14" r="4"/><circle cx="12.500" cy="14" r="4"/></g><circle cx="9" cy="9.500" r="3" fill="#c0504e"/></svg>
<svg class="a" style="left:569px;top:826px" width="19" height="14" viewBox="0 0 19 14"><rect width="19" height="14" rx="1" fill="#3a3a3a"/><rect y="2" width="19" height="2" fill="#888"/><circle cx="10" cy="8" r="4" fill="#9a9a9a" stroke="#222"/></svg>
<div class="t" style="left:588px;top:826px;font-size:18.7px;color:#111">: @sirmapy</div>
<div class="t" style="left:569px;top:869px;font-size:18.7px;color:#2d6ff0">#JESUS</div>

<svg class="a" style="left:544px;top:911px" width="544" height="119" viewBox="0 0 544 119"><defs><linearGradient id="pk" x1="0" y1="0" x2="1" y2="0"><stop offset="0" stop-color="#ecc0c4"/><stop offset=".5" stop-color="#e0aeb3"/><stop offset="1" stop-color="#cb9194"/></linearGradient></defs><rect width="544" height="119" fill="url(#pk)"/><path d="M100 119q4-32 18-50 12-24 27-33 26-14 53-12 24 2 37 12 14 14 21 33 8 22 13 50z" fill="#2c1618"/><path d="M126 119V96q0-12 3-20 18-30 69-47l10 23 6 20 8 47z" fill="#8f5a42"/><path d="M150 50q24-16 46-10l-8 16z" fill="#b98a70" opacity=".6"/><path d="M132 78q12-6 22-1M178 94q12-4 20 2" stroke="#1e0e0c" stroke-width="3" fill="none"/><path d="M160 84q6 14 8 20" stroke="#7a4a36" stroke-width="3" fill="none"/><path d="M140 117q16-8 32 0v2h-32z" fill="#e8d8d4"/></svg>
<svg class="a" style="left:1094px;top:911px" width="250" height="119" viewBox="0 0 250 119"><defs><linearGradient id="pk2" x1="0" y1="0" x2="1" y2="0"><stop offset="0" stop-color="#f2d2d6"/><stop offset=".5" stop-color="#ebbcc0"/><stop offset="1" stop-color="#e2aab0"/></linearGradient></defs><rect width="250" height="119" fill="url(#pk2)"/><path d="M64 46q2-26 18-36 12-8 24-2 18 8 28 36 10 22 14 35l-12 10-22-4-6 4-26-2-6 12q-14-24-12-53z" fill="#38201e"/><path d="M74 60q-2-30 20-42 8 6 14 22 8 22 2 34-6 14-18 14-16-6-18-28z" fill="#a5694a"/><ellipse cx="82" cy="55" rx="4" ry="2.500" fill="#1c0e0c"/><ellipse cx="103" cy="53" rx="4" ry="2.500" fill="#1c0e0c"/><path d="M86 74q7 3 13 0l-2 6h-8z" fill="#b0403e"/><path d="M78 96l4-10 20 0 8 8 26 6 22 19H58l4-15z" fill="#2a2a2e"/><g stroke="#eee" stroke-width="2"><path d="M62 106h94"/><path d="M60 112h100"/><path d="M56 118h108"/><path d="M80 92h30"/><path d="M76 99h50"/></g></svg>

<!-- right column -->
<div class="t hd" style="left:1454px;top:165px">Your Pages and profiles</div>
<svg class="a" style="left:1786px;top:173px" width="19" height="6" viewBox="0 0 19 6" fill="#444"><circle cx="3" cy="3" r="2.400"/><circle cx="9.500" cy="3" r="2.400"/><circle cx="16" cy="3" r="2.400"/></svg>
<svg class="a r" style="left:1454px;top:203px;width:38px;height:44px"><use href="#me" width="100%" height="100%"/></svg>
<div class="t side" style="left:1511px;top:213px">Fohr-tuhn Festus</div>
<svg class="a" style="left:1472px;top:260px" width="20" height="21" viewBox="0 0 20 21" fill="none" stroke="#444" stroke-width="1.400"><path d="M3 3q7-3 11 2 3 4 5 5l-13 7q1-2-1-5Q2 8 3 3zM9 17q2 3 5 1"/></svg>
<div class="t b" style="left:1510.500px;top:260px;font-size:16.2px;color:#888">2 Notifications</div>
<svg class="a" style="left:1473px;top:303px" width="20" height="19" viewBox="0 0 20 19" fill="none" stroke="#444" stroke-width="1.400"><path d="M1 6h5l11-5v12L6 9H1zM5 9l1 9h4l-1-8M16 2v10q3-1 3-5t-3-5z"/></svg>
<div class="t b" style="left:1510.500px;top:301px;font-size:16.2px;color:#888">Create promotion</div>
<div class="ln" style="left:1454px;top:341px;width:350px"></div>
<div class="t hd" style="left:1454px;top:359px">Friend requests</div>
<div class="t" style="left:1751px;top:359px;font-size:17.3px;color:#2d6ff0">See all</div>
<svg class="a r" style="left:1454px;top:418px;width:63px;height:62px"><use href="#sky2" width="100%" height="100%"/></svg>
<div class="t" style="left:1529px;top:405px;font-size:17.7px;color:#000">Lateef Bolanle Sakirat</div>
<div class="t" style="left:1775px;top:405px;font-size:16.2px;color:#999">5d</div>
<svg class="a r" style="left:1542px;top:433px;width:20px;height:21px;border:1px solid #fff" viewBox="0 0 20 20"><rect width="20" height="20" fill="#1a1a1a"/><rect x="8" width="12" height="20" fill="#aaa"/><ellipse cx="9" cy="10" rx="6" ry="9" fill="#111"/></svg>
<svg class="a r" style="left:1529px;top:433px;width:20px;height:21px;border:1px solid #fff" viewBox="0 0 20 20"><rect width="20" height="20" fill="#3a3a38"/><rect y="11" width="20" height="9" fill="#d86a20"/></svg>
<div class="t" style="left:1566.500px;top:432px;font-size:16.2px;color:#999">21 mutual friends</div>
<div class="a" style="left:1529px;top:465px;width:125px;height:38px;background:#1877f2;border-radius:7px;color:#fff;font-weight:700;font-size:16.5px;line-height:38px;text-align:center">Confirm</div>
<div class="a" style="left:1667px;top:465px;width:125px;height:38px;background:#e4e6e6;border-radius:7px;color:#000;font-weight:700;font-size:16.5px;line-height:38px;text-align:center">Delete</div>
<div class="ln" style="left:1454px;top:522px;width:350px"></div>
<div class="t hd" style="left:1454px;top:533px">Birthdays</div>
<svg class="a" style="left:1458px;top:573px" width="30" height="32" viewBox="0 0 30 32"><rect x="1" y="12" width="28" height="20" fill="#1f86f2"/><rect y="8" width="30" height="6" fill="#1878f2"/><rect x="12" y="8" width="6" height="24" fill="#f01c80"/><path d="M15 8Q6 9 5 3q1-3 4-2 4 2 6 7 2-5 6-7 3-1 4 2-1 6-10 5z" fill="#f01c80"/></svg>
<div class="t" style="left:1504px;top:567px;font-size:16.25px;color:#666"><span class="b">Mirabel Sunday</span> and <span class="b">3 others</span> have</div>
<div class="t" style="left:1504px;top:586px;font-size:16.25px;color:#666">birthdays today.</div>
<div class="ln" style="left:1454px;top:624px;width:350px"></div>
<div class="t hd" style="left:1454px;top:636px">Contacts</div>
<svg class="a" style="left:1667px;top:643px" width="20" height="13" viewBox="0 0 20 13"><rect width="15" height="13" rx="2.500" fill="#000"/><path d="M15 5l5-3v9l-5-3z" fill="#000"/><path d="M6.500 3h2v2.500H11v2H8.500V10h-2V7.500H4v-2h2.500z" fill="#fff"/></svg>
<svg class="a" style="left:1709px;top:641px" width="19" height="19" viewBox="0 0 19 19" fill="none" stroke="#c4c4c4" stroke-width="1.400"><circle cx="8.500" cy="8.500" r="7.500"/><path d="M14 14l4.500 4.500"/></svg>
<svg class="a" style="left:1749px;top:649px" width="19" height="6" viewBox="0 0 19 6" fill="#444"><circle cx="3" cy="3" r="2.400"/><circle cx="9.500" cy="3" r="2.400"/><circle cx="16" cy="3" r="2.400"/></svg>

<svg class="a r" style="left:1460px;top:684px;width:44px;height:43px"><use href="#p1" width="100%" height="100%"/></svg>
<div class="g gw" style="left:1490px;top:720px"></div>
<div class="t ct" style="left:1516.500px;top:696px">Ayomide Balogun</div>
<svg class="a r" style="left:1460px;top:744px;width:44px;height:44px"><use href="#p2" width="100%" height="100%"/></svg>
<div class="g gw" style="left:1490px;top:780px"></div>
<div class="t ct" style="left:1517.500px;top:756px">T'roy Chris</div>
<svg class="a r" style="left:1460px;top:804px;width:44px;height:44px"><use href="#p3" width="100%" height="100%"/></svg>
<div class="g gw" style="left:1490px;top:840px"></div>
<div class="t ct" style="left:1517.500px;top:816px">Samuel Umana</div>
<svg class="a r" style="left:1460px;top:864px;width:44px;height:44px"><use href="#p4" width="100%" height="100%"/></svg>
<div class="g gw" style="left:1490px;top:900px"></div>
<div class="t ct" style="left:1516.500px;top:877px">Mdy Benson</div>
<svg class="a r" style="left:1460px;top:925px;width:44px;height:43px"><use href="#p5" width="100%" height="100%"/></svg>
<div class="g gw" style="left:1490px;top:961px"></div>
<div class="t ct" style="left:1516.500px;top:937px">Henrietta</div>
<svg class="a r" style="left:1460px;top:985px;width:44px;height:44px"><use href="#p6" width="100%" height="100%"/></svg>
<div class="g gw" style="left:1490px;top:1021px"></div>
<div class="t ct" style="left:1516.500px;top:997px">Khen Nie</div>

<!-- scrollbar -->
<div class="a" style="left:1899px;top:89px;width:21px;height:941px;background:#f0f0f0"></div>
<div class="a" style="left:1901px;top:110px;width:17px;height:551px;background:#bdbdbd"></div>
<div class="a" style="left:1905px;top:98px;width:0;height:0;border-left:4.500px solid transparent;border-right:4.500px solid transparent;border-bottom:5px solid #a4a4a4"></div>
<div class="a" style="left:1905px;top:1017px;width:0;height:0;border-left:4.500px solid transparent;border-right:4.500px solid transparent;border-top:5px solid #505050"></div>
</div>
</body></html>
